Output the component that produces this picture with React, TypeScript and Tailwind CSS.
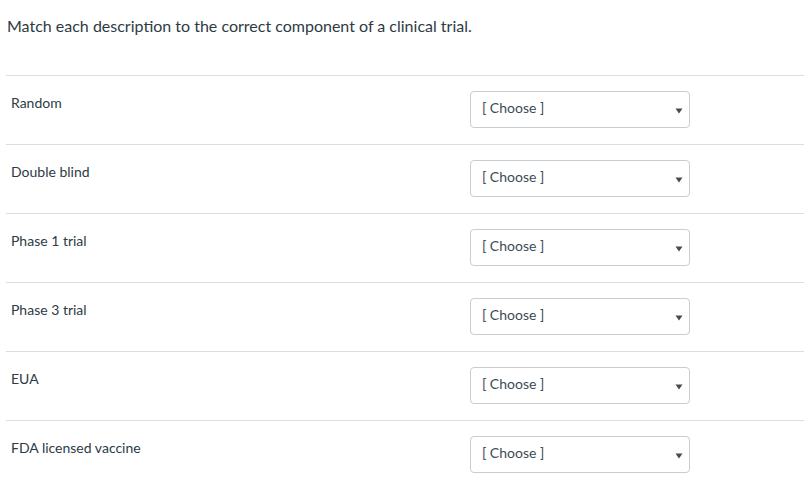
const rows = [
  "Random",
  "Double blind",
  "Phase 1 trial",
  "Phase 3 trial",
  "EUA",
  "FDA licensed vaccine",
];

function ChooseBox() {
  return (
    <div className="flex h-[37px] w-[220px] items-center justify-between rounded-[4px] border border-[#c7cdd1] bg-white pl-[11px] pr-[6px]">
      <span className="mb-[3px] text-[14px] leading-5 text-[#3d4b55]">[ Choose ]</span>
      <svg width="8" height="6" viewBox="0 0 8 6" className="mt-[2px]">
        <path d="M0.5 0.5 L7.5 0.5 L4 5.5 Z" fill="#4a4a4a" />
      </svg>
    </div>
  );
}

export default function App() {
  return (
    <div
      className="min-h-screen bg-white pl-[6px] text-[#2d3b45]"
      style={{ fontFamily: "Lato, 'Liberation Sans', sans-serif" }}
    >
      <p className="pt-[14px] pl-px text-[16px] leading-6">
        Match each description to the correct component of a clinical trial.
      </p>
      <div className="mt-[37px]">
        {rows.map((label) => (
          <div key={label} className="flex border-t border-[#dddddd]">
            <div className="w-[464px] pl-[5px] pt-[17px] text-[14px] leading-5">
              {label}
            </div>
            <div className="pt-[15px] pb-[16px]">
              <ChooseBox />
            </div>
          </div>
        ))}
      </div>
    </div>
  );
}
